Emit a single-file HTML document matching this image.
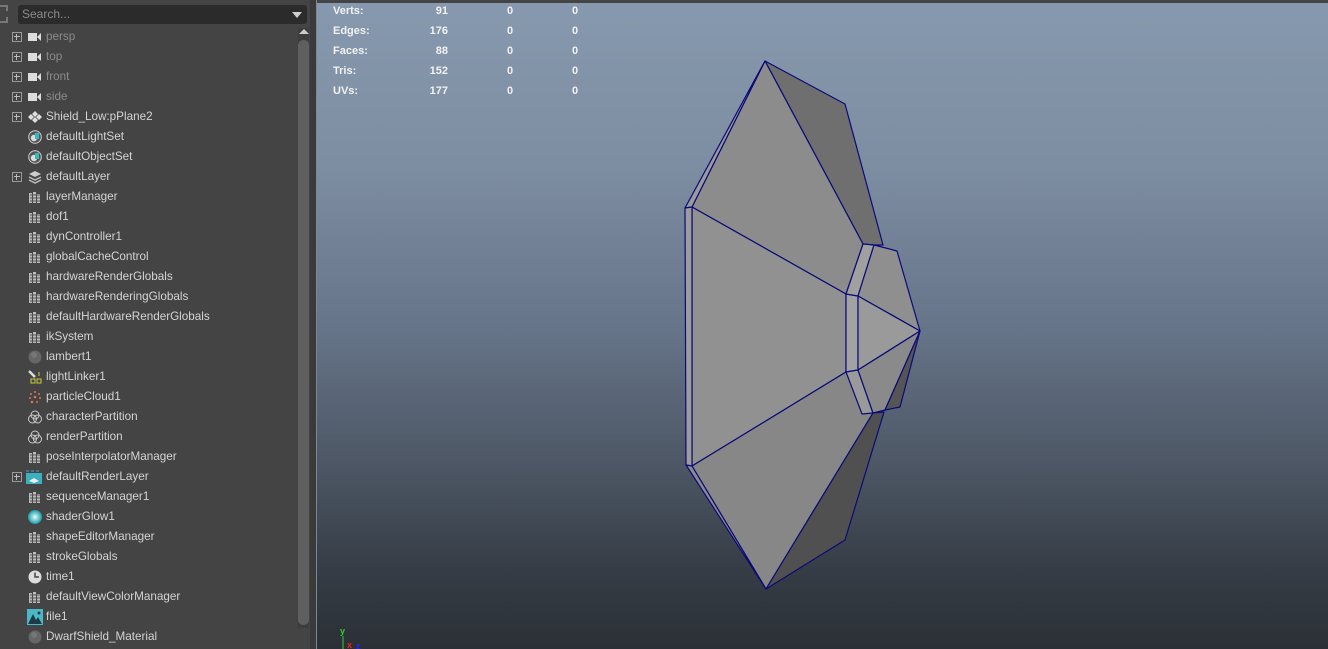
<!DOCTYPE html>
<html><head><meta charset="utf-8"><style>
*{margin:0;padding:0;box-sizing:border-box}
body{width:1328px;height:649px;overflow:hidden;background:#444;font-family:"Liberation Sans",sans-serif;position:relative}
#left{position:absolute;left:0;top:0;width:310px;height:649px;background:#444}
#search{position:absolute;left:18px;top:5px;width:289px;height:19px;background:#2b2b2b;border-radius:3px;color:#8a8a8a;font-size:12px;line-height:19px;padding-left:4px}
#search:after{content:"";position:absolute;right:5px;top:7px;border-left:5px solid transparent;border-right:5px solid transparent;border-top:6px solid #cfcfcf}
#tl{position:absolute;left:-2px;top:5px;width:10px;height:18px;border:2px dashed #777}
.row{position:absolute;left:0;height:20px;width:296px;font-size:11.7px;line-height:20px;color:#d4d4d4;margin-top:1px}
.row span{position:absolute;left:46px}
.row.g{color:#8c8c8c}
.pl{position:absolute;left:12px;top:5px;width:10px;height:10px;border:1px solid #9a9a9a}
.pl:before{content:"";position:absolute;left:1px;top:3px;width:6px;height:1px;background:#bbb}
.pl:after{content:"";position:absolute;left:3px;top:1px;width:1px;height:6px;background:#bbb}
.ic{position:absolute;left:28px;top:3px;width:14px;height:14px}
#sb{position:absolute;left:298px;top:28px;width:11px;height:600px;background:#3d3d3d}
#thumb{position:absolute;left:298px;top:40px;width:11px;height:585px;background:#5f5f5f;border-radius:5px}
#sbup{position:absolute;left:299px;top:29px;border-left:5px solid transparent;border-right:5px solid transparent;border-bottom:5px solid #ccc}
#sep{position:absolute;left:310px;top:0;width:8px;height:649px;background:#3a3a3a}
#sepl{position:absolute;left:316px;top:0;width:1px;height:649px;background:#7c8794}
#vp{position:absolute;left:317px;top:3px;width:1011px;height:646px;background:linear-gradient(#8799ae 0%,#7d8da2 25%,#67758a 50%,#4c5664 72%,#353c45 88%,#2b3036 100%)}
#topbar{position:absolute;left:317px;top:0;width:1011px;height:3px;background:#444}
.hud{position:absolute;font-size:11px;font-weight:bold;color:#f2f2f2}
</style></head><body>
<div id="left">
<div id="tl"></div>
<div id="search">Search...</div>
<div id="sb"></div><div id="thumb"></div><div id="sbup"></div>

<div class="row g" style="top:26px"><div class="pl"></div><svg class="ic" viewBox="0 0 14 14"><rect x="0" y="3" width="9" height="8" fill="#ddd"/><path d="M9 7L13 3V11Z" fill="#ddd"/></svg><span>persp</span></div>
<div class="row g" style="top:46px"><div class="pl"></div><svg class="ic" viewBox="0 0 14 14"><rect x="0" y="3" width="9" height="8" fill="#ddd"/><path d="M9 7L13 3V11Z" fill="#ddd"/></svg><span>top</span></div>
<div class="row g" style="top:66px"><div class="pl"></div><svg class="ic" viewBox="0 0 14 14"><rect x="0" y="3" width="9" height="8" fill="#ddd"/><path d="M9 7L13 3V11Z" fill="#ddd"/></svg><span>front</span></div>
<div class="row g" style="top:86px"><div class="pl"></div><svg class="ic" viewBox="0 0 14 14"><rect x="0" y="3" width="9" height="8" fill="#ddd"/><path d="M9 7L13 3V11Z" fill="#ddd"/></svg><span>side</span></div>
<div class="row" style="top:106px"><div class="pl"></div><svg class="ic" viewBox="0 0 14 14"><path d="M7 1L10 4 7 7 4 4ZM3 4L6 7 3 10 0 7ZM11 4L14 7 11 10 8 7ZM7 7L10 10 7 13 4 10Z" fill="#ddd"/></svg><span>Shield_Low:pPlane2</span></div>
<div class="row" style="top:126px"><svg class="ic" viewBox="0 0 14 14"><circle cx="7" cy="7" r="6.3" fill="#555" stroke="#ccc"/><circle cx="6" cy="8" r="3.2" fill="#ddd"/><rect x="7" y="3" width="4" height="6" fill="#3bb"/></svg><span>defaultLightSet</span></div>
<div class="row" style="top:146px"><svg class="ic" viewBox="0 0 14 14"><circle cx="7" cy="7" r="6.3" fill="#555" stroke="#ccc"/><circle cx="6" cy="8" r="3.2" fill="#ddd"/><rect x="7" y="3" width="4" height="6" fill="#3bb"/></svg><span>defaultObjectSet</span></div>
<div class="row" style="top:166px"><div class="pl"></div><svg class="ic" viewBox="0 0 14 14"><path d="M7 1L13 4 7 7 1 4Z" fill="#ccc"/><path d="M1 7L7 10 13 7M1 10L7 13 13 10" stroke="#bbb" fill="none" stroke-width="1.5"/></svg><span>defaultLayer</span></div>
<div class="row" style="top:186px"><svg class="ic" viewBox="0 0 14 14"><path d="M1 3h3v10H1zM5 2h3v11H5zM9 4h3v9H9z" fill="#bbb"/><path d="M2 5h10M2 8h10M2 11h10" stroke="#555"/></svg><span>layerManager</span></div>
<div class="row" style="top:206px"><svg class="ic" viewBox="0 0 14 14"><path d="M1 3h3v10H1zM5 2h3v11H5zM9 4h3v9H9z" fill="#bbb"/><path d="M2 5h10M2 8h10M2 11h10" stroke="#555"/></svg><span>dof1</span></div>
<div class="row" style="top:226px"><svg class="ic" viewBox="0 0 14 14"><path d="M1 3h3v10H1zM5 2h3v11H5zM9 4h3v9H9z" fill="#bbb"/><path d="M2 5h10M2 8h10M2 11h10" stroke="#555"/></svg><span>dynController1</span></div>
<div class="row" style="top:246px"><svg class="ic" viewBox="0 0 14 14"><path d="M1 3h3v10H1zM5 2h3v11H5zM9 4h3v9H9z" fill="#bbb"/><path d="M2 5h10M2 8h10M2 11h10" stroke="#555"/></svg><span>globalCacheControl</span></div>
<div class="row" style="top:266px"><svg class="ic" viewBox="0 0 14 14"><path d="M1 3h3v10H1zM5 2h3v11H5zM9 4h3v9H9z" fill="#bbb"/><path d="M2 5h10M2 8h10M2 11h10" stroke="#555"/></svg><span>hardwareRenderGlobals</span></div>
<div class="row" style="top:286px"><svg class="ic" viewBox="0 0 14 14"><path d="M1 3h3v10H1zM5 2h3v11H5zM9 4h3v9H9z" fill="#bbb"/><path d="M2 5h10M2 8h10M2 11h10" stroke="#555"/></svg><span>hardwareRenderingGlobals</span></div>
<div class="row" style="top:306px"><svg class="ic" viewBox="0 0 14 14"><path d="M1 3h3v10H1zM5 2h3v11H5zM9 4h3v9H9z" fill="#bbb"/><path d="M2 5h10M2 8h10M2 11h10" stroke="#555"/></svg><span>defaultHardwareRenderGlobals</span></div>
<div class="row" style="top:326px"><svg class="ic" viewBox="0 0 14 14"><path d="M1 3h3v10H1zM5 2h3v11H5zM9 4h3v9H9z" fill="#bbb"/><path d="M2 5h10M2 8h10M2 11h10" stroke="#555"/></svg><span>ikSystem</span></div>
<div class="row" style="top:346px"><svg class="ic" viewBox="0 0 14 14"><circle cx="7" cy="7" r="6.5" fill="#666"/><circle cx="6" cy="5" r="3" fill="#777"/></svg><span>lambert1</span></div>
<div class="row" style="top:366px"><svg class="ic" viewBox="0 0 14 14"><path d="M1 1L7 7" stroke="#ddd" stroke-width="2.5"/><path d="M3 9h4v4H3zM9 9h4v4H9z" stroke="#cc3" fill="none"/><path d="M11 2v4" stroke="#cc3"/></svg><span>lightLinker1</span></div>
<div class="row" style="top:386px"><svg class="ic" viewBox="0 0 14 14"><g fill="#e07050"><circle cx="7" cy="2" r="1"/><circle cx="3" cy="4" r="1"/><circle cx="11" cy="4" r="1"/><circle cx="2" cy="8" r="1"/><circle cx="7" cy="7" r="1.3"/><circle cx="12" cy="8" r="1"/><circle cx="4" cy="12" r="1.3"/><circle cx="9" cy="12" r="1"/></g></svg><span>particleCloud1</span></div>
<div class="row" style="top:406px"><svg class="ic" viewBox="0 0 14 14" fill="none" stroke="#ccc"><circle cx="7" cy="5" r="4"/><circle cx="4.5" cy="9" r="4"/><circle cx="9.5" cy="9" r="4"/></svg><span>characterPartition</span></div>
<div class="row" style="top:426px"><svg class="ic" viewBox="0 0 14 14" fill="none" stroke="#ccc"><circle cx="7" cy="5" r="4"/><circle cx="4.5" cy="9" r="4"/><circle cx="9.5" cy="9" r="4"/></svg><span>renderPartition</span></div>
<div class="row" style="top:446px"><svg class="ic" viewBox="0 0 14 14"><path d="M1 3h3v10H1zM5 2h3v11H5zM9 4h3v9H9z" fill="#bbb"/><path d="M2 5h10M2 8h10M2 11h10" stroke="#555"/></svg><span>poseInterpolatorManager</span></div>
<div class="row" style="top:466px"><div class="pl"></div><svg class="ic" viewBox="0 0 16 14" style="width:16px;left:26px"><rect x="0" y="3" width="16" height="11" fill="#3ab0c0"/><path d="M0 1h3M5 1h3M10 1h3" stroke="#3ab0c0"/><path d="M3 11L8 8 13 11 8 13Z" fill="#eee"/></svg><span>defaultRenderLayer</span></div>
<div class="row" style="top:486px"><svg class="ic" viewBox="0 0 14 14"><path d="M1 3h3v10H1zM5 2h3v11H5zM9 4h3v9H9z" fill="#bbb"/><path d="M2 5h10M2 8h10M2 11h10" stroke="#555"/></svg><span>sequenceManager1</span></div>
<div class="row" style="top:506px"><svg class="ic" viewBox="0 0 14 14"><defs><radialGradient id="gl"><stop offset="0" stop-color="#e8ffff"/><stop offset="1" stop-color="#1a9aa8"/></radialGradient></defs><circle cx="7" cy="7" r="7" fill="url(#gl)"/></svg><span>shaderGlow1</span></div>
<div class="row" style="top:526px"><svg class="ic" viewBox="0 0 14 14"><path d="M1 3h3v10H1zM5 2h3v11H5zM9 4h3v9H9z" fill="#bbb"/><path d="M2 5h10M2 8h10M2 11h10" stroke="#555"/></svg><span>shapeEditorManager</span></div>
<div class="row" style="top:546px"><svg class="ic" viewBox="0 0 14 14"><path d="M1 3h3v10H1zM5 2h3v11H5zM9 4h3v9H9z" fill="#bbb"/><path d="M2 5h10M2 8h10M2 11h10" stroke="#555"/></svg><span>strokeGlobals</span></div>
<div class="row" style="top:566px"><svg class="ic" viewBox="0 0 14 14"><circle cx="7" cy="7" r="6.5" fill="#ddd"/><path d="M7 2.5V7H11" stroke="#444" stroke-width="1.5" fill="none"/></svg><span>time1</span></div>
<div class="row" style="top:586px"><svg class="ic" viewBox="0 0 14 14"><path d="M1 3h3v10H1zM5 2h3v11H5zM9 4h3v9H9z" fill="#bbb"/><path d="M2 5h10M2 8h10M2 11h10" stroke="#555"/></svg><span>defaultViewColorManager</span></div>
<div class="row" style="top:606px"><svg class="ic" viewBox="0 0 16 16" style="width:16px;height:16px;top:2px;left:27px"><rect width="16" height="16" fill="#4bb8c8"/><path d="M1 15L6 5 9 11 11 8 15 15Z" fill="#1d3c48"/><circle cx="12" cy="4" r="1.5" fill="#1d3c48"/></svg><span>file1</span></div>
<div class="row" style="top:626px"><svg class="ic" viewBox="0 0 14 14"><circle cx="7" cy="7" r="6.5" fill="#666"/><circle cx="6" cy="5" r="3" fill="#777"/></svg><span>DwarfShield_Material</span></div>
</div>
<div id="sep"></div><div id="sepl"></div>
<div id="topbar"></div>
<div id="vp"></div>

<div class="hud" style="left:333px;top:5px">Verts:</div><div class="hud" style="left:400px;top:5px;width:48px;text-align:right">91</div><div class="hud" style="left:507px;top:5px">0</div><div class="hud" style="left:572px;top:5px">0</div>
<div class="hud" style="left:333px;top:25px">Edges:</div><div class="hud" style="left:400px;top:25px;width:48px;text-align:right">176</div><div class="hud" style="left:507px;top:25px">0</div><div class="hud" style="left:572px;top:25px">0</div>
<div class="hud" style="left:333px;top:45px">Faces:</div><div class="hud" style="left:400px;top:45px;width:48px;text-align:right">88</div><div class="hud" style="left:507px;top:45px">0</div><div class="hud" style="left:572px;top:45px">0</div>
<div class="hud" style="left:333px;top:65px">Tris:</div><div class="hud" style="left:400px;top:65px;width:48px;text-align:right">152</div><div class="hud" style="left:507px;top:65px">0</div><div class="hud" style="left:572px;top:65px">0</div>
<div class="hud" style="left:333px;top:85px">UVs:</div><div class="hud" style="left:400px;top:85px;width:48px;text-align:right">177</div><div class="hud" style="left:507px;top:85px">0</div><div class="hud" style="left:572px;top:85px">0</div>

<svg style="position:absolute;left:0;top:0" width="1328" height="649" viewBox="0 0 1328 649">
<g stroke="#0a0a78" stroke-width="1.2" stroke-linejoin="round">
<path d="M765 61L845 104 883 245 874 245 863 244Z" fill="#6f6f6f"/>
<path d="M765 61L692 207 846 294 863 244Z" fill="#8c8c8c"/>
<path d="M765 61L685 208 692 207Z" fill="#9a9a9a"/>
<path d="M692 207L692 466 846 372 846 294Z" fill="#919191"/>
<path d="M685 208L692 207 692 466 686 465Z" fill="#9c9c9c"/>
<path d="M692 466L766 589 873 413 858 370 846 372Z" fill="#878787"/>
<path d="M686 465L692 466 766 589Z" fill="#8a8a8a"/>
<path d="M766 589L845 540 884 412 873 413Z" fill="#505050"/>
<path d="M846 294L858 296 858 370 846 372Z" fill="#a2a2a2"/>
<path d="M846 294L863 244 874 245 858 296Z" fill="#a0a0a0"/>
<path d="M846 372L858 370 873 413 862 414Z" fill="#9a9a9a"/>
<path d="M858 296L874 245 897 251 920 331Z" fill="#8f8f8f"/>
<path d="M858 296L920 331 858 370Z" fill="#9a9a9a"/>
<path d="M858 370L920 331 885 410 873 413Z" fill="#8a8a8a"/>
<path d="M920 331L900 407 885 410Z" fill="#555"/>
</g>
<line x1="343" y1="636" x2="343" y2="649" stroke="#3c3"/>
<text x="340" y="634" font-family="Liberation Sans" font-size="9" font-weight="bold" fill="#3c3">y</text>
<text x="347" y="648" font-family="Liberation Sans" font-size="9" font-weight="bold" fill="#e22">x</text>
<text x="356" y="649" font-family="Liberation Sans" font-size="9" font-weight="bold" fill="#22e">z</text>
</svg>
</body></html>
